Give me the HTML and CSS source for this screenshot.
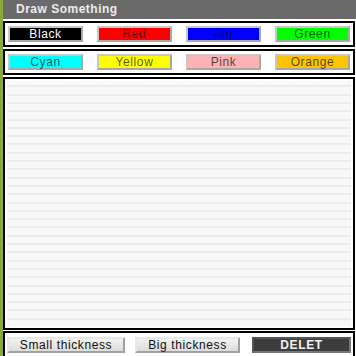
FILE: index.html
```html
<!DOCTYPE html>
<html lang="en">
<head>
    <meta charset="UTF-8" />
    <title>Draw Something</title>
    <link rel="stylesheet" href="styles.css">
</head>
<body>
    <div class="app">
        <header class="title">Draw Something</header>

        <div class="palette">
            <button class="swatch black">Black</button>
            <button class="swatch red">Red</button>
            <button class="swatch blue">Blu</button>
            <button class="swatch green">Green</button>
        </div>

        <div class="palette">
            <button class="swatch cyan">Cyan</button>
            <button class="swatch yellow">Yellow</button>
            <button class="swatch pink">Pink</button>
            <button class="swatch orange">Orange</button>
        </div>

        <div class="canvas"></div>

        <div class="toolbar">
            <button class="tool small">Small thickness</button>
            <button class="tool big">Big thickness</button>
            <button class="tool delete">DELET</button>
        </div>
    </div>
</body>
</html>
```

FILE: styles.css
```css
* {
    margin: 0;
    padding: 0;
    box-sizing: border-box;
}

body {
    font-family: 'Liberation Sans', Arial, sans-serif;
    background: #ffffff;
    overflow: hidden;
}

.app {
    height: 356px;
    border-left: 3px solid #8ba83b;
    display: flex;
    flex-direction: column;
    overflow: hidden;
}

.title {
    height: 19px;
    line-height: 19px;
    padding-left: 13px;
    background: #6a6a6a;
    color: #ececec;
    font-size: 12px;
    font-weight: 700;
    letter-spacing: 0.5px;
}

.palette {
    height: 26px;
    margin: 2px 1px 0 0;
    border: 2px solid #000;
    padding: 0 3px;
    display: flex;
    align-items: center;
    justify-content: space-between;
}

.swatch {
    width: 75px;
    height: 16px;
    border: 2px solid #a8a8a8;
    border-top-color: #c8c8c8;
    border-left-color: #c8c8c8;
    font-family: inherit;
    font-size: 12px;
    letter-spacing: 0.6px;
    line-height: 12px;
    color: rgba(0, 0, 0, 0.68);
}

.black { background: #000000; color: #ffffff; }
.red { background: #ff0000; }
.blue { background: #0000ff; }
.green { background: #00ff00; }
.cyan { background: #00ffff; }
.yellow { background: #ffff00; }
.pink { background: #ffb3b3; }
.orange { background: #ffc400; }

.canvas {
    height: 253px;
    margin: 2px 1px 0 0;
    border: 2px solid #000;
    box-shadow: inset 0 0 0 2px #ffffff;
    background: repeating-linear-gradient(
        to bottom,
        #f8f8f8 0,
        #f8f8f8 6.3px,
        #ececec 6.3px,
        #ececec 8.3px
    );
}

.toolbar {
    flex: 1;
    margin: 1px 1px 0 0;
    border: 2px solid #000;
    border-bottom: none;
    padding: 4px 0 0 2px;
    display: flex;
    align-items: flex-start;
}

.tool {
    height: 16px;
    font-family: inherit;
    font-size: 12px;
    letter-spacing: 0.6px;
    line-height: 12px;
    color: #111111;
    background: linear-gradient(#f2f2f2, #dcdcdc);
    border: 2px solid #a0a0a0;
    border-top-color: #e8e8e8;
    border-left-color: #e8e8e8;
}

.small {
    width: 118px;
}

.big {
    width: 105px;
    margin-left: 10px;
}

.delete {
    width: 99px;
    margin-left: 12px;
    background: #3c3c3c;
    color: #f0f0f0;
    font-weight: 700;
    border-color: #777;
    border-top-color: #555;
    border-left-color: #555;
}
```
